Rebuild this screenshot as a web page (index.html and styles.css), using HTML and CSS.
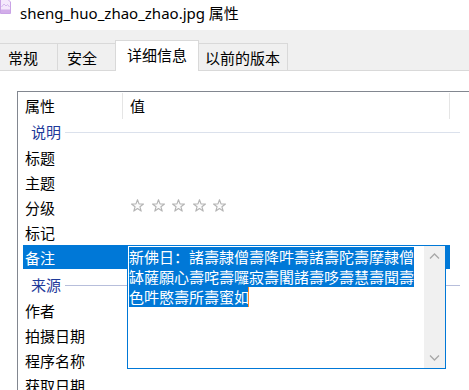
FILE: index.html
```html
<!DOCTYPE html>
<html lang="zh-CN">
<head>
<meta charset="utf-8">
<title>属性</title>
<link rel="stylesheet" href="styles.css">
</head>
<body>
<div class="titlebar">
  <svg class="ficon" width="11" height="14" viewBox="0 0 11 14">
    <path d="M0.5 -1 H7.5 L10.5 2 V13.5 H0.5 Z" fill="#f4e8fc" stroke="#c9a3e6"/>
    <path d="M1.5 7 L4 4 L6 6 L7.5 4.5 L9.5 7" stroke="#d4b8ee" fill="none"/>
    <rect x="1" y="9.5" width="9" height="3.5" fill="#d2ade9"/>
  </svg>
  <span class="title">sheng_huo_zhao_zhao.jpg 属性</span>
</div>
<div class="tabs">
  <div class="tab t1">常规</div>
  <div class="tab t2">安全</div>
  <div class="tab t3 sel">详细信息</div>
  <div class="tab t4">以前的版本</div>
</div>
<div class="content">
  <div class="list">
    <div class="lhead">
      <div class="hc hc1">属性</div>
      <div class="hc hc2">值</div>
    </div>
    <div class="group"><span class="gtext">说明</span><i class="gline"></i></div>
    <div class="row"><span class="lbl">标题</span></div>
    <div class="row"><span class="lbl">主题</span></div>
    <div class="row"><span class="lbl">分级</span>
      <span class="stars">
        <svg class="star" viewBox="0 0 13 13"><polygon points="6.5,0.7 8.03,4.9 12.49,5.05 8.97,7.8 10.2,12.1 6.5,9.6 2.8,12.1 4.03,7.8 0.51,5.05 4.97,4.9"/></svg>
        <svg class="star" viewBox="0 0 13 13"><polygon points="6.5,0.7 8.03,4.9 12.49,5.05 8.97,7.8 10.2,12.1 6.5,9.6 2.8,12.1 4.03,7.8 0.51,5.05 4.97,4.9"/></svg>
        <svg class="star" viewBox="0 0 13 13"><polygon points="6.5,0.7 8.03,4.9 12.49,5.05 8.97,7.8 10.2,12.1 6.5,9.6 2.8,12.1 4.03,7.8 0.51,5.05 4.97,4.9"/></svg>
        <svg class="star" viewBox="0 0 13 13"><polygon points="6.5,0.7 8.03,4.9 12.49,5.05 8.97,7.8 10.2,12.1 6.5,9.6 2.8,12.1 4.03,7.8 0.51,5.05 4.97,4.9"/></svg>
        <svg class="star" viewBox="0 0 13 13"><polygon points="6.5,0.7 8.03,4.9 12.49,5.05 8.97,7.8 10.2,12.1 6.5,9.6 2.8,12.1 4.03,7.8 0.51,5.05 4.97,4.9"/></svg>
      </span>
    </div>
    <div class="row"><span class="lbl">标记</span></div>
    <div class="row sel"><span class="lbl">备注</span>
      <div class="editbox">
        <div class="edittext">
          <div class="sl">新佛日：諸壽隷僧壽降吽壽諸壽陀壽摩隷僧</div>
          <div class="sl">缽薩願心壽咤壽囉寂壽闍諸壽哆壽慧壽聞壽</div>
          <div class="sl">色吽愍壽所壽蜜如<span class="caret"></span></div>
        </div>
        <div class="scroll">
          <div class="arrow"><svg width="11" height="7" viewBox="0 0 11 7"><polyline points="1,5.5 5.5,1 10,5.5" fill="none" stroke="#a8a8a8" stroke-width="1.3"/></svg></div>
          <div class="arrow"><svg width="11" height="7" viewBox="0 0 11 7"><polyline points="1,1.5 5.5,6 10,1.5" fill="none" stroke="#a8a8a8" stroke-width="1.3"/></svg></div>
        </div>
      </div>
    </div>
    <div class="group g2"><span class="gtext">来源</span><i class="gline"></i></div>
    <div class="row"><span class="lbl">作者</span></div>
    <div class="row"><span class="lbl">拍摄日期</span></div>
    <div class="row"><span class="lbl">程序名称</span></div>
    <div class="row"><span class="lbl">获取日期</span></div>
  </div>
</div>
</body>
</html>
```
FILE: styles.css
```css
html, body {
  margin: 0;
  padding: 0;
}
body {
  width: 469px;
  height: 390px;
  overflow: hidden;
  background: #fff;
  color: #000;
  font-family: "Noto Sans CJK SC", sans-serif;
  font-size: 15px;
}

.titlebar {
  height: 30px;
  display: flex;
  align-items: flex-start;
  background: #fff;
}
.ficon {
  flex: none;
  display: block;
}
.title {
  margin-left: 9px;
  font-family: "Noto Sans", "Noto Sans CJK SC", sans-serif;
  font-size: 15px;
  line-height: 26px;
  white-space: nowrap;
}

.tabs {
  height: 40px;
  display: flex;
  align-items: flex-end;
  background: #f0f0f0;
  border-bottom: 1px solid #d9d9d9;
}
.tab {
  box-sizing: border-box;
  height: 27px;
  border-top: 1px solid #d9d9d9;
  border-left: 1px solid #d9d9d9;
  padding-top: 6px;
  line-height: 15px;
  white-space: nowrap;
}
.t1 { width: 57px; padding-left: 8px; border-left: none; }
.t2 { width: 58px; padding-left: 9px; }
.t3 { width: 84px; padding-left: 11px; }
.t4 { width: 89px; padding-left: 6px; border-left: none; border-right: 1px solid #d9d9d9; }
.tab.sel {
  height: 31px;
  margin-bottom: -1px;
  background: #fff;
  border-right: 1px solid #d9d9d9;
}

.content {
  height: 319px;
  overflow: hidden;
  padding: 20px 0 0 17px;
}
.list {
  width: 470px;
  height: 330px;
  border: 1px solid #828790;
  position: relative;
}

.lhead {
  display: flex;
  height: 27px;
  padding-top: 1px;
  box-sizing: border-box;
}
.hc {
  box-sizing: border-box;
  height: 26px;
  line-height: 26px;
  padding-left: 7px;
  border-right: 1px solid #e5e5e5;
}
.hc1 { width: 105px; }
.hc2 { width: 327px; }

.group {
  display: flex;
  align-items: center;
  width: 442px;
  height: 26px;
  line-height: 26px;
  padding-left: 13px;
  box-sizing: border-box;
  color: #1e3a9a;
}
.gline {
  flex: 1;
  height: 1px;
  margin-left: 4px;
  background: #dbe1ec;
}
.g2 { margin-top: 2px; }
.g2 .gline { background: #b7bedb; }

.row {
  position: relative;
  display: flex;
  width: 427px;
  height: 25px;
  margin-left: 5px;
  line-height: 25px;
}
.lbl {
  flex: none;
  width: 104px;
  padding-left: 2px;
  box-sizing: border-box;
  white-space: nowrap;
}
.row.sel {
  background: linear-gradient(#0078d7, #0078d7) top left / 100% 24px no-repeat;
  color: #fff;
}

.stars {
  display: flex;
  gap: 7.6px;
  padding-left: 4px;
  padding-top: 4px;
}
.star {
  width: 13px;
  height: 13px;
  display: block;
  fill: #fbfbfb;
  stroke: #b5b5b5;
  stroke-width: 1.15;
  stroke-linejoin: round;
}

.editbox {
  position: absolute;
  left: 104px;
  top: 0;
  z-index: 1;
  width: 319px;
  height: 124px;
  box-sizing: border-box;
  border: 1px solid #0078d7;
  background: #fff;
  display: flex;
  color: #000;
}
.edittext {
  flex: 1;
  padding: 1px 0 0 1px;
}
.sl {
  width: fit-content;
  height: 20px;
  line-height: 20px;
  white-space: nowrap;
  background: #0078d7;
  color: #fff;
}
.caret {
  display: inline-block;
  vertical-align: top;
  width: 1px;
  height: 20px;
  margin-left: -1px;
  background: #ff8728;
}
.scroll {
  flex: none;
  width: 21px;
  background: #f0f0f0;
  display: flex;
  flex-direction: column;
  justify-content: space-between;
}
.arrow {
  height: 21px;
  display: flex;
  align-items: center;
  justify-content: center;
}
.arrow svg { display: block; }
```
